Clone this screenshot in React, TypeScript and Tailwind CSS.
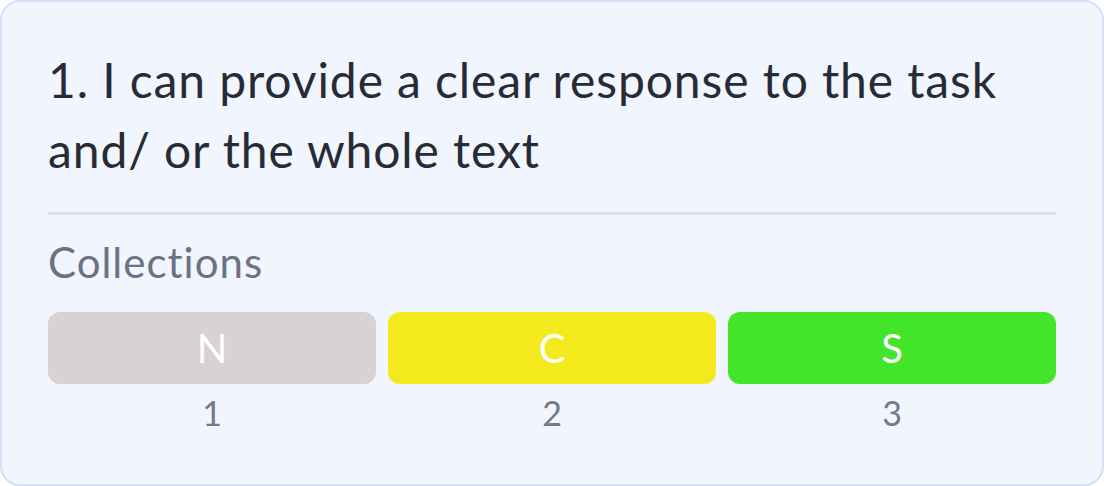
export default function App() {
  const levels = [
    { letter: 'N', value: 1, color: 'bg-[#d8d2d2]' },
    { letter: 'C', value: 2, color: 'bg-[#f3ea1e]' },
    { letter: 'S', value: 3, color: 'bg-[#43e52b]' },
  ]

  return (
    <div className="w-[1104px] h-[486px] bg-white font-['Lato',sans-serif]">
      <div className="h-full rounded-[20px] border-2 border-[#d6e0f8] bg-[#f1f5fe] px-[46px] pt-[43px]">
        <h1 className="text-[48px] leading-[70px] text-[#272b35] tracking-[0.9px]">
          1. I can provide a clear response to the task and/ or the whole text
        </h1>

        <div className="mt-[27px] h-[3px] bg-[#d6def5]" />

        <p className="mt-[21px] text-[42px] leading-[52px] text-[#6b7283] tracking-[1px]">Collections</p>

        <div className="mt-[24px] grid grid-cols-3 gap-[12px]">
          {levels.map(l => (
            <div key={l.letter} className="flex flex-col items-center">
              <div
                className={`w-full h-[72px] rounded-[12px] ${l.color} flex items-center justify-center text-white text-[40px]`}
              >
                {l.letter}
              </div>
              <span className="mt-[9px] text-[34px] leading-[40px] text-[#737a8a]">{l.value}</span>
            </div>
          ))}
        </div>
      </div>
    </div>
  )
}
